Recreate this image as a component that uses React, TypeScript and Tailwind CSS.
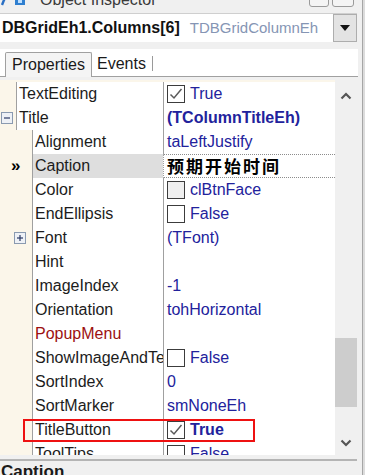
import React from "react";

type Row = {
  name: string;
  level: 0 | 1;
  value?: string;
  bold?: boolean;
  check?: "on" | "off" | "color";
  toggle?: "plus" | "minus";
  red?: boolean;
  selected?: boolean;
};

const ROWS: Row[] = [
  { name: "TextEditing", level: 0, value: "True", check: "on" },
  { name: "Title", level: 0, value: "(TColumnTitleEh)", bold: true, toggle: "minus" },
  { name: "Alignment", level: 1, value: "taLeftJustify" },
  { name: "Caption", level: 1, value: "预期开始时间", selected: true },
  { name: "Color", level: 1, value: "clBtnFace", check: "color" },
  { name: "EndEllipsis", level: 1, value: "False", check: "off" },
  { name: "Font", level: 1, value: "(TFont)", toggle: "plus" },
  { name: "Hint", level: 1 },
  { name: "ImageIndex", level: 1, value: "-1" },
  { name: "Orientation", level: 1, value: "tohHorizontal" },
  { name: "PopupMenu", level: 1, red: true },
  { name: "ShowImageAndText", level: 1, value: "False", check: "off" },
  { name: "SortIndex", level: 1, value: "0" },
  { name: "SortMarker", level: 1, value: "smNoneEh" },
  { name: "TitleButton", level: 1, value: "True", check: "on", bold: true },
  { name: "ToolTips", level: 1, value: "False", check: "off" },
];

const FONT = { fontFamily: '"Liberation Sans", Arial, sans-serif' };

function CheckBox({ kind }: { kind: "on" | "off" | "color" }) {
  return (
    <span
      className={
        "w-[18px] h-[18px] border border-[#3c3c3c] flex items-center justify-center shrink-0 " +
        (kind === "color" ? "bg-[#efefef]" : "bg-white")
      }
    >
      {kind === "on" && (
        <svg width="16" height="16" viewBox="0 0 16 16">
          <path d="M2.5 8.5 L6 12 L13.5 3" fill="none" stroke="#5a5a5a" strokeWidth="1.5" />
        </svg>
      )}
    </span>
  );
}

function ToggleBox({ kind }: { kind: "plus" | "minus" }) {
  return (
    <span className="w-[12px] h-[12px] border border-[#8a9ab0] bg-[#eef1f6] flex items-center justify-center">
      <svg width="10" height="10" viewBox="0 0 10 10">
        <path d="M2 5 H8" stroke="#2b3a66" strokeWidth="1.2" />
        {kind === "plus" && <path d="M5 2 V8" stroke="#2b3a66" strokeWidth="1.2" />}
      </svg>
    </span>
  );
}

function GridRow({ row }: { row: Row }) {
  const gutter = row.level === 0 ? "w-[16px]" : "w-[32px]";
  return (
    <div className="flex h-[24px] shrink-0">
      <div className={gutter + " shrink-0 bg-[#fbf6ea] flex items-center"}>
        {row.toggle === "minus" && (
          <span className="ml-[1px]">
            <ToggleBox kind="minus" />
          </span>
        )}
        {row.toggle === "plus" && (
          <span className="ml-[14px]">
            <ToggleBox kind="plus" />
          </span>
        )}
        {row.selected && (
          <span className="ml-[11px] text-[17px] font-bold leading-none text-black -mt-[2px]">»</span>
        )}
      </div>
      <div
        className={
          "flex-1 min-w-0 border-l border-[#a0a0a0] pl-[2px] flex items-center overflow-hidden whitespace-nowrap text-[16px] " +
          (row.selected ? "bg-[#dedede] " : "bg-white ") +
          (row.red ? "text-[#9c1010]" : "text-[#1c1c1c]")
        }
      >
        {row.name}
      </div>
      <div
        className={
          "w-[172px] shrink-0 border-l border-[#a0a0a0] bg-white pl-[3px] flex items-center gap-[5px] overflow-hidden whitespace-nowrap " +
          (row.selected ? "border-y border-dotted border-y-[#8c8c8c]" : "")
        }
      >
        {row.check && <CheckBox kind={row.check} />}
        {row.value && (
          <span
            className={
              row.selected
                ? "text-[17px] font-bold text-black tracking-[2px]"
                : "text-[16px] text-[#22229c] " + (row.bold ? "font-bold" : "")
            }
            style={
              row.selected
                ? { fontFamily: '"Noto Sans CJK SC", "Liberation Sans", sans-serif' }
                : undefined
            }
          >
            {row.value}
          </span>
        )}
      </div>
    </div>
  );
}

function Chevron({ up }: { up?: boolean }) {
  return (
    <svg width="12" height="8" viewBox="0 0 12 8">
      <path
        d={up ? "M1.5 6.5 L6 2 L10.5 6.5" : "M1.5 1.5 L6 6 L10.5 1.5"}
        fill="none"
        stroke="#555"
        strokeWidth="2.2"
      />
    </svg>
  );
}

export default function App() {
  return (
    <div className="w-[386px] h-[475px] overflow-hidden bg-white flex" style={FONT}>
      {/* Inspector panel */}
      <div className="w-[362px] shrink-0 bg-[#f0f0f0] flex flex-col">
        {/* Title bar (cut off at top) */}
        <div className="h-[13px] shrink-0 overflow-hidden flex items-start">
          <div className="flex items-center gap-[4px] pl-[1px] -mt-[8px]">
            <svg width="9" height="14" viewBox="0 0 9 14">
              <path d="M1 13 L3 8 L8 1" stroke="#2a6fc4" strokeWidth="2.4" fill="none" />
            </svg>
            <svg width="12" height="14" viewBox="0 0 12 14">
              <rect x="1" y="4" width="10" height="9" fill="#2f7fd0" />
              <rect x="4" y="7" width="4" height="4" fill="#bfe0ff" />
            </svg>
          </div>
          <span className="ml-[14px] text-[16px] text-[#3a3a3a] leading-none -mt-[8px]">Object Inspector</span>
          <div className="ml-auto mr-[8px] flex gap-[3px] -mt-[7px]">
            <span className="w-[20px] h-[14px] border border-[#9a9a9a] rounded-[3px] bg-[#f4f4f4]" />
            <span className="w-[22px] h-[14px] border border-[#9a9a9a] rounded-[3px] bg-[#f4f4f4]" />
          </div>
        </div>

        {/* Object selector combo */}
        <div className="h-[29px] shrink-0 w-[357px] bg-white border-t border-[#cfcfcf] flex items-center">
          <span className="pl-[2px] text-[16px] font-bold text-[#111] whitespace-nowrap">DBGridEh1.Columns[6]</span>
          <span className="ml-[10px] text-[15px] text-[#8595b4] whitespace-nowrap">TDBGridColumnEh</span>
          <span className="ml-auto w-[24px] h-[28px] border border-[#adadad] bg-[#e3e3e3] flex items-center justify-center">
            <svg width="10" height="6" viewBox="0 0 10 6">
              <path d="M0 0 H10 L5 6 Z" fill="#111" />
            </svg>
          </span>
        </div>

        <div className="h-[7px] shrink-0" />

        {/* Tabs */}
        <div className="h-[28px] shrink-0 w-[358px] bg-white flex items-end border-b border-[#a0a0a0]">
          <div className="w-[5px]" />
          <div className="h-[25px] w-[87px] -mb-[1px] border border-b-0 border-[#a0a0a0] rounded-t-[2px] bg-[#f4f4f4] flex items-center justify-center text-[16px] text-[#1a1a1a]">
            Properties
          </div>
          <div className="h-[25px] flex items-center pl-[5px] text-[16px] text-[#1a1a1a]">
            Events
            <span className="ml-[6px] w-[1px] h-[15px] bg-[#9a9a9a]" />
          </div>
        </div>

        <div className="h-[3px] shrink-0" />

        {/* Property grid */}
        <div className="h-[375px] shrink-0 w-[357px] flex">
          <div className="w-[335px] flex flex-col overflow-hidden pt-[2px] bg-[#fbf6ea] relative">
            {ROWS.map((r) => (
              <GridRow key={r.name} row={r} />
            ))}
            {/* highlight around TitleButton */}
            <div className="absolute left-[23px] top-[339px] w-[232px] h-[23px] border-2 border-[#ee1111]" />
          </div>
          <div className="w-[22px] bg-[#f0f0f0] flex flex-col items-center">
            <div className="h-[32px] flex items-center">
              <Chevron up />
            </div>
            <div className="h-[226px]" />
            <div className="w-full h-[69px] bg-[#cdcdcd]" />
            <div className="flex-1" />
            <div className="h-[16px] flex items-start">
              <Chevron />
            </div>
          </div>
        </div>

        <div className="h-[4px] shrink-0" />
        <div className="h-[2px] shrink-0 w-[357px] bg-[#b4b4b4]" />
        <div className="pl-[1px] pt-[1px] text-[17px] font-bold text-[#1a1a1a] leading-[20px]">Caption</div>
      </div>
      {/* Right edge */}
      <div className="w-[1px] bg-[#a6a6a6]" />
      <div className="w-[2px] bg-[#dcdcdc]" />
      <div className="flex-1 bg-white" />
    </div>
  );
}
